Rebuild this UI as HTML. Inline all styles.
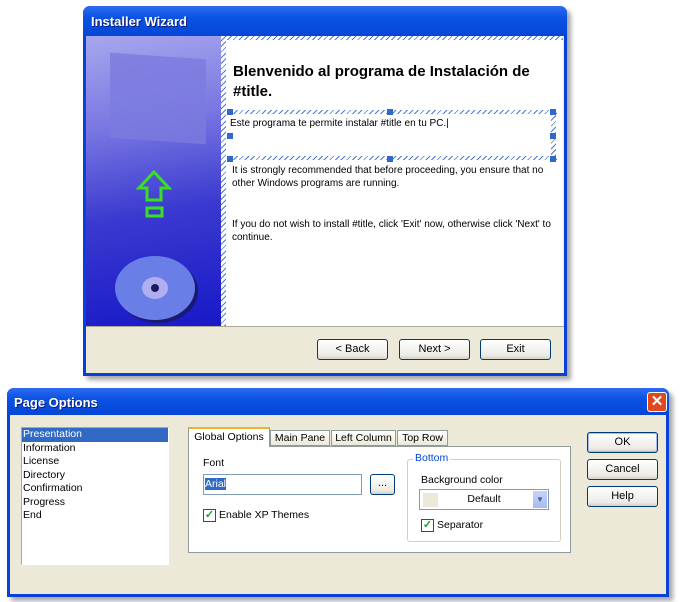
<!DOCTYPE html>
<html><head><style>
*{box-sizing:border-box;margin:0;padding:0}
body{width:680px;height:602px;background:#fff;position:relative;overflow:hidden;font-family:"Liberation Sans",Tahoma,sans-serif;font-size:11px;color:#000}
.abs{position:absolute}
.win{position:absolute;background:#0841d8;border-radius:7px 7px 0 0;box-shadow:4px 4px 5px rgba(0,0,0,.35)}
.tb{position:absolute;left:0;right:0;top:0;background:linear-gradient(#2d6cf0,#0a52e4 40%,#0646d6);border-radius:7px 7px 0 0;color:#fff;font-weight:bold;font-size:13px;padding-left:8px;text-shadow:1px 1px #0a1e7a}
.btn{position:absolute;border:1px solid #003c74;border-radius:3px;background:linear-gradient(#fff,#ecebe6 80%,#d6d0c5);text-align:center;font-size:11px;line-height:18px}
.hatch{position:absolute;background:repeating-linear-gradient(135deg,transparent 0 3px,#4a7ad8 3px 4px)}
.h{position:absolute;width:6px;height:6px;background:#3168d0}
</style></head><body>

<!-- Installer Wizard -->
<div class="win" style="left:83px;top:6px;width:484px;height:370px">
  <div class="tb" style="height:30px;line-height:32px">Installer Wizard</div>
  <div class="abs" style="left:3px;top:30px;width:478px;height:337px;background:#ece9d8"></div>
  <div class="abs" style="left:3px;top:30px;width:135px;height:290px;background:linear-gradient(170deg,#a7a7ee 0%,#7a78e2 30%,#3a3ad0 60%,#1818c8 100%)">
    <div class="abs" style="left:24px;top:20px;width:96px;height:85px;background:#7c7ade;transform:skewY(4deg);opacity:.8"></div>
    <svg class="abs" style="left:50px;top:134px" width="36" height="50" viewBox="0 0 36 50"><path d="M18 2 L33 18 L25 18 L25 30 L11 30 L11 18 L3 18 Z" fill="none" stroke="#3ae020" stroke-width="3"/><rect x="11" y="38" width="15" height="8" fill="none" stroke="#3ae020" stroke-width="3"/></svg>
    <svg class="abs" style="left:28px;top:218px" width="84" height="70" viewBox="0 0 84 70"><ellipse cx="44" cy="37" rx="40" ry="32" fill="#1a1a70"/><ellipse cx="41" cy="34" rx="40" ry="32" fill="#6a7ee8"/><ellipse cx="41" cy="34" rx="13" ry="11" fill="#b0aef0"/><ellipse cx="41" cy="34" rx="4" ry="4" fill="#1a1a60"/></svg>
  </div>
  <div class="abs" style="left:138px;top:30px;width:342px;height:290px;background:#fff">
    <div class="hatch" style="left:0;top:0;width:342px;height:4px"></div>
    <div class="hatch" style="left:0;top:0;width:5px;height:290px"></div>
    <div class="abs" style="left:12px;top:26px;font-size:15px;font-weight:bold;line-height:20px;width:320px">Blenvenido al programa de Instalación de #title.</div>
    <div class="hatch" style="left:6px;top:74px;width:330px;height:4px"></div>
    <div class="hatch" style="left:6px;top:120px;width:330px;height:4px"></div>
    <div class="hatch" style="left:330px;top:74px;width:5px;height:50px"></div>
    <div class="h" style="left:6px;top:73px"></div><div class="h" style="left:6px;top:97px"></div><div class="h" style="left:6px;top:120px"></div>
    <div class="h" style="left:166px;top:73px"></div><div class="h" style="left:166px;top:120px"></div>
    <div class="h" style="left:329px;top:73px"></div><div class="h" style="left:329px;top:97px"></div><div class="h" style="left:329px;top:120px"></div>
    <div class="abs" style="left:9px;top:82px;font-size:10px">Este programa te permite instalar #title en tu PC.|</div>
    <div class="abs" style="left:11px;top:128px;font-size:10px;line-height:13px;width:330px">It is strongly recommended that before proceeding, you ensure that no other Windows programs are running.</div>
    <div class="abs" style="left:11px;top:182px;font-size:10px;line-height:13px;width:330px">If you do not wish to install #title, click 'Exit' now, otherwise click 'Next' to continue.</div>
  </div>
  <div class="abs" style="left:3px;top:320px;width:478px;height:1px;background:#aca899"></div>
  <div class="btn" style="left:234px;top:333px;width:71px;height:21px">&lt; Back</div>
  <div class="btn" style="left:316px;top:333px;width:71px;height:21px">Next &gt;</div>
  <div class="btn" style="left:397px;top:333px;width:71px;height:21px">Exit</div>
</div>

<!-- Page Options -->
<div class="win" style="left:7px;top:388px;width:662px;height:209px">
  <div class="tb" style="height:27px;line-height:30px;padding-left:7px">Page Options</div>
  <div class="abs" style="left:640px;top:4px;width:20px;height:20px;border:1px solid #fff;border-radius:3px;background:#e0491e;color:#fff;text-align:center;font-size:15px;line-height:18px;font-weight:bold">✕</div>
  <div class="abs" style="left:3px;top:27px;width:656px;height:179px;background:#ece9d8"></div>
  <div class="abs" style="left:14px;top:39px;width:148px;height:138px;background:#fff;border:1px solid #7f9db9;border-color:#aca899 #fff #fff #aca899;font-size:10.5px;line-height:13.5px">
    <div style="background:#316ac5;color:#fff;padding-left:1px">Presentation</div>
    <div style="padding-left:1px">Information<br>License<br>Directory<br>Confirmation<br>Progress<br>End</div>
  </div>
  <div class="abs" style="left:181px;top:58px;width:383px;height:107px;background:#fff;border:1px solid #919b9c"></div>
  <div class="abs" style="left:181px;top:39px;width:82px;height:20px;background:#fff;border:1px solid #919b9c;border-bottom:none;border-top:2px solid #f0b030;font-size:10.5px;line-height:16px;text-align:center">Global Options</div>
  <div class="abs" style="left:263px;top:42px;width:60px;height:16px;background:linear-gradient(#fff,#ece9d8);border:1px solid #919b9c;font-size:10.5px;line-height:15px;text-align:center">Main Pane</div>
  <div class="abs" style="left:324px;top:42px;width:65px;height:16px;background:linear-gradient(#fff,#ece9d8);border:1px solid #919b9c;font-size:10.5px;line-height:15px;text-align:center">Left Column</div>
  <div class="abs" style="left:390px;top:42px;width:51px;height:16px;background:linear-gradient(#fff,#ece9d8);border:1px solid #919b9c;font-size:10.5px;line-height:15px;text-align:center">Top Row</div>
  <div class="abs" style="left:196px;top:69px;font-size:10.5px">Font</div>
  <div class="abs" style="left:196px;top:86px;width:159px;height:21px;border:1px solid #7f9db9;background:#fff;padding:3px 1px"><span style="background:#316ac5;color:#fff;font-size:10.5px">Arial</span></div>
  <div class="btn" style="left:363px;top:86px;width:25px;height:21px;line-height:17px">...</div>
  <div class="abs" style="left:196px;top:121px;width:13px;height:13px;border:1px solid #1c5180;background:#fff;color:#21a121;font-size:11px;line-height:11px;text-align:center;font-weight:bold">✓</div>
  <div class="abs" style="left:212px;top:121px;font-size:10.5px">Enable XP Themes</div>
  <div class="abs" style="left:400px;top:71px;width:154px;height:83px;border:1px solid #d0d0bf;border-radius:3px"></div>
  <div class="abs" style="left:406px;top:64px;background:#fff;padding:0 2px;color:#0046d5;font-size:10.5px">Bottom</div>
  <div class="abs" style="left:414px;top:86px;font-size:10.5px">Background color</div>
  <div class="abs" style="left:412px;top:101px;width:130px;height:21px;border:1px solid #7f9db9;background:#fff">
    <div class="abs" style="left:3px;top:3px;width:15px;height:14px;background:#ece9d8"></div>
    <div class="abs" style="left:20px;top:3px;width:88px;text-align:center;font-size:10.5px">Default</div>
    <div class="abs" style="right:1px;top:1px;width:14px;height:17px;background:linear-gradient(#c6d3f7,#a6bcef);color:#4d6185;font-size:8px;text-align:center;line-height:17px">▼</div>
  </div>
  <div class="abs" style="left:414px;top:131px;width:13px;height:13px;border:1px solid #1c5180;background:#fff;color:#21a121;font-size:11px;line-height:11px;text-align:center;font-weight:bold">✓</div>
  <div class="abs" style="left:430px;top:131px;font-size:10.5px">Separator</div>
  <div class="btn" style="left:580px;top:44px;width:71px;height:21px;border-color:#003c74;box-shadow:inset 0 0 0 1px #a4bdf0">OK</div>
  <div class="btn" style="left:580px;top:71px;width:71px;height:21px">Cancel</div>
  <div class="btn" style="left:580px;top:98px;width:71px;height:21px">Help</div>
</div>
</body></html>
